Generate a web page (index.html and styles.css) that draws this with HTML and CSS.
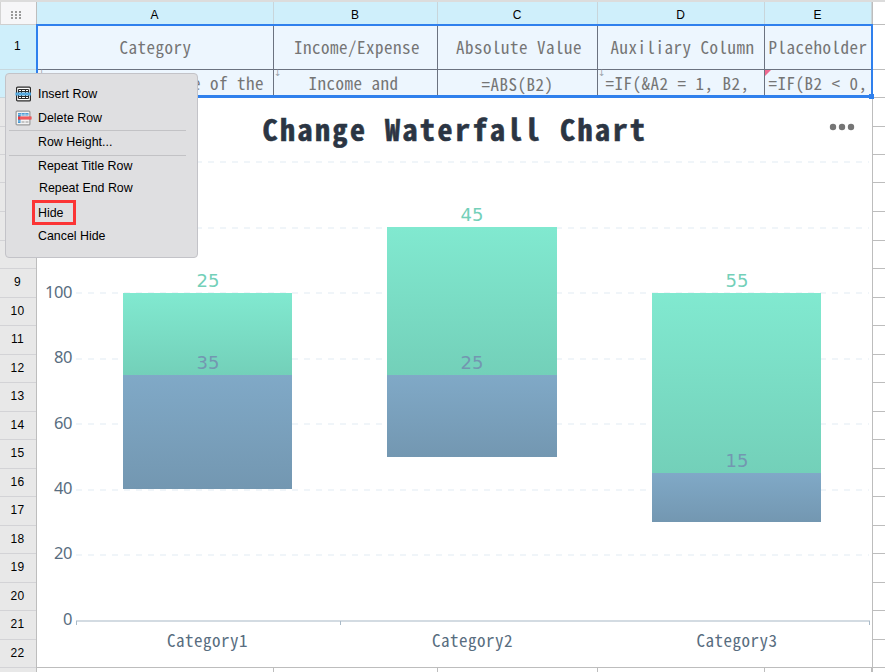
FILE: index.html
```html
<!DOCTYPE html>
<html lang="en">
  <head>
    <meta charset="UTF-8" />
    <meta name="viewport" content="width=device-width, initial-scale=1.0" />
    <title>Change Waterfall Chart</title>
    <link rel="stylesheet" href="styles.css">
  </head>
  <body>
    <div class="sheet">
      <div class="row-heads">
        <div class="corner">
          <svg width="11" height="9" viewBox="0 0 11 9" fill="#999">
            <path d="M0 0h2v2H0zM4 0h2v2H4zM8 0h2v2H8zM0 3h2v2H0zM4 3h2v2H4zM8 3h2v2H8zM0 6h2v2H0zM4 6h2v2H4zM8 6h2v2H8z" />
          </svg>
        </div>
        <div class="row-head first on">1</div>
        <div class="row-head on"></div>
        <!-- rows 3 to 22 -->
        <div class="row-head"></div>
        <div class="row-head"></div>
        <div class="row-head"></div>
        <div class="row-head"></div>
        <div class="row-head"></div>
        <div class="row-head"></div>
        <div class="row-head">9</div>
        <div class="row-head">10</div>
        <div class="row-head">11</div>
        <div class="row-head">12</div>
        <div class="row-head">13</div>
        <div class="row-head">14</div>
        <div class="row-head">15</div>
        <div class="row-head">16</div>
        <div class="row-head">17</div>
        <div class="row-head">18</div>
        <div class="row-head">19</div>
        <div class="row-head">20</div>
        <div class="row-head">21</div>
        <div class="row-head">22</div>
        <div class="row-head"></div>
      </div>

      <div class="main">
        <div class="cols col-heads">
          <div>A</div>
          <div>B</div>
          <div>C</div>
          <div>D</div>
          <div>E</div>
        </div>
        <div class="selection">
          <div class="cols title-row">
            <div>Category</div>
            <div class="nudge">Income/Expense</div>
            <div class="nudge">Absolute Value</div>
            <div class="nudge">Auxiliary Column</div>
            <div>Placeholder</div>
          </div>
          <div class="cols data-row">
            <div class="expand cell-a">Name of the</div>
            <div class="expand cell-b">Income and</div>
            <div class="cell-c">=ABS(B2)</div>
            <div class="expand cell-d">=IF(&amp;A2 = 1, B2,</div>
            <div class="flag cell-e">=IF(B2 &lt; 0,</div>
          </div>
          <span class="handle"></span>
        </div>

        <svg class="chart" width="835" height="569" viewBox="37 98 835 569">
          <defs>
            <linearGradient id="green" x1="0" y1="0" x2="0" y2="1">
              <stop offset="0" stop-color="#81e9d0" />
              <stop offset="1" stop-color="#73d0b9" />
            </linearGradient>
            <linearGradient id="blue" x1="0" y1="0" x2="0" y2="1">
              <stop offset="0" stop-color="#80a9c7" />
              <stop offset="1" stop-color="#7397b1" />
            </linearGradient>
          </defs>
          <text class="chart-title" x="262.5" y="141">Change Waterfall Chart</text>
          <g fill="#757575">
            <circle cx="833" cy="127" r="3.2" />
            <circle cx="842" cy="127" r="3.2" />
            <circle cx="851" cy="127" r="3.2" />
          </g>
          <path class="grid" d="M76 162H869M76 228H869M76 293H869M76 359H869M76 424H869M76 490H869M76 555H869" />
          <path class="axis" d="M76 621H870" />
          <path class="tick" d="M76.5 621v4M340.5 621v4M869.5 621v4" />
          <g class="y-label">
            <text x="72" y="298">100</text>
            <text x="72" y="363">80</text>
            <text x="72" y="429">60</text>
            <text x="72" y="494">40</text>
            <text x="72" y="559">20</text>
            <text x="72" y="625">0</text>
          </g>
          <g fill="url(#green)">
            <rect x="123" y="293" width="169" height="82" />
            <rect x="387" y="227" width="170" height="148" />
            <rect x="652" y="293" width="169" height="180" />
          </g>
          <g fill="url(#blue)">
            <rect x="123" y="375" width="169" height="114" />
            <rect x="387" y="375" width="170" height="82" />
            <rect x="652" y="473" width="169" height="49" />
          </g>
          <g class="value up">
            <text x="208" y="287">25</text>
            <text x="472" y="221">45</text>
            <text x="737" y="287">55</text>
          </g>
          <g class="value down">
            <text x="208" y="369">35</text>
            <text x="472" y="369">25</text>
            <text x="737" y="467">15</text>
          </g>
          <g class="x-label">
            <text x="207.500" y="647">Category1</text>
            <text x="472.500" y="647">Category2</text>
            <text x="737" y="647">Category3</text>
          </g>
        </svg>
        <div class="cols last-row">
          <div></div>
          <div></div>
          <div></div>
          <div></div>
          <div></div>
        </div>
      </div>

      <div class="rest">
        <div></div>
        <div></div>
        <div></div>
        <div></div>
        <div></div>
        <div></div>
        <div></div>
        <div></div>
        <div></div>
        <div></div>
        <div></div>
        <div></div>
        <div></div>
        <div></div>
        <div></div>
        <div></div>
        <div></div>
        <div></div>
        <div></div>
        <div></div>
        <div></div>
        <div></div>
        <div></div>
        <div></div>
      </div>

      <div class="menu">
        <div class="item">
          <svg class="icon" width="17" height="16" viewBox="0 0 17 16">
            <rect x="1.6" y="1.1" width="13.8" height="13.8" rx="1" fill="#fff" stroke="#2b2b2b" stroke-width="1.2" />
            <path d="M3.500 3.500h10v9h-10zM3.500 5.500h10M3.500 10.500h10M6.500 3v10M10.500 3v10" fill="none" stroke="#2b2b2b" />
            <path d="M0.500 6.500h15.500v3H0.500z" fill="#3f9ad6" />
            <path d="M1.500 8h13.500" stroke="#76bdec" />
          </svg>
          <span>Insert Row</span>
        </div>
        <div class="item delete">
          <svg class="icon" width="17" height="16" viewBox="0 0 17 16">
            <rect x="1.1" y="1.1" width="13.8" height="13.8" rx="1" fill="#f4f4f4" stroke="#9a9a9a" stroke-width="1.2" />
            <path d="M3 3h10.500v2.600H3zM3 3h2.500v10H3z" fill="#3f94d0" />
            <path d="M3 4.300h10.500M6.500 2.500v3.500M10 2.500v3.500M3 11h2.500" stroke="#cfe3f2" stroke-width=".6" />
            <path d="M6.500 11h3v2h-3zM10.500 11h3v2h-3z" fill="#c4c4c4" />
            <path d="M3 6.500h13.500v3H3z" fill="#e9383d" />
            <path d="M5 8h11" stroke="#f77a7d" />
          </svg>
          <span>Delete Row</span>
        </div>
        <hr />
        <div class="item height">Row Height...</div>
        <hr />
        <div class="item title">Repeat Title Row</div>
        <div class="item end">Repeat End Row</div>
        <div class="item hide"><span>Hide</span></div>
        <div class="item cancel">Cancel Hide</div>
      </div>
    </div>
  </body>
</html>
```
FILE: styles.css
```css
body {
  margin: 0;
  background: #fff;
  font-family: "Liberation Sans", Arial, sans-serif;
  font-size: 12px;
}

.sheet {
  position: relative;
  display: flex;
  box-sizing: border-box;
  width: 885px;
  height: 672px;
  border-top: 2px solid #dcdcdc;
  overflow: hidden;
}

.row-heads,
.rest {
  display: grid;
  grid-template-rows: 23px 45px 28px 29px 28px 28px 29px 29px 28px 29px 28px 29px 28px 29px 28px 29px 28px 29px 28px 29px 28px 29px 28px 29px;
}

.row-heads {
  flex: none;
  box-sizing: border-box;
  width: 37px;
  border-right: 1px solid #bdbdbd;
}

.corner {
  display: flex;
  align-items: center;
  justify-content: center;
  padding: 5px 5px 0 0;
  border-left: 1px solid #d4d4d4;
  border-bottom: 1px solid #cfcfcf;
  background: #f6f6f8;
}

.row-head {
  display: flex;
  align-items: center;
  justify-content: center;
  padding: 0 1px 2px 0;
  border-bottom: 1px solid #d3d3d6;
  background: #e8e8e8;
  letter-spacing: 0.3px;
}

.row-head.on {
  background: #cfeffb;
  border-color: #c8d8de;
}

.main {
  flex: none;
  width: 835px;
}

.cols {
  display: grid;
  grid-template-columns: 237px 164px 160px 167px 107px;
}

.cols div {
  display: flex;
  align-items: center;
  justify-content: center;
  box-sizing: border-box;
  border-right: 1px solid #6b7280;
  white-space: nowrap;
}

.col-heads {
  height: 22px;
  background: #cfeffb;
}

.cols.col-heads div {
  padding: 3px 1px 0 0;
  border-color: #c9d5da;
}

.selection {
  position: relative;
  box-sizing: border-box;
  width: 837px;
  height: 74px;
  margin-left: -1px;
  border: 2px solid #2f80ed;
  border-bottom-width: 3px;
  background: #edf6fe;
  color: #757575;
  font-family: "Noto Sans CJK JP", sans-serif;
  font-size: 17px;
  line-height: 20px;
  font-feature-settings: "hwid";
  letter-spacing: 0.5px;
}

.selection .cols {
  grid-template-columns: 236px 164px 160px 167px 106px;
}

.selection .cols div:last-child {
  border-right: none;
}

.title-row {
  height: 43px;
  border-bottom: 1px solid #6b7280;
}

.title-row .nudge {
  padding-left: 3px;
}

.title-row div {
  padding-bottom: 1px;
}

.data-row {
  height: 25px;
}

.data-row .cell-a {
  justify-content: flex-end;
  padding-right: 9px;
}

.data-row .cell-b {
  padding-right: 4px;
}

.data-row .cell-c {
  padding-top: 3px;
}

.data-row .cell-d {
  padding-right: 7px;
}

.expand,
.flag {
  position: relative;
}

.expand::before {
  content: "↓";
  position: absolute;
  left: 0;
  top: -2px;
  color: #9aa2aa;
  font: 9px/11px "DejaVu Sans", sans-serif;
}

.flag::before {
  content: "";
  position: absolute;
  left: 0;
  top: 0;
  border-top: 6px solid #ee6a90;
  border-right: 6px solid transparent;
}

.handle {
  position: absolute;
  right: -3px;
  bottom: -4px;
  width: 5px;
  height: 5px;
  background: #2f80ed;
}

.chart {
  display: block;
  background: #fff;
}

.chart-title {
  fill: #2b3543;
  stroke: #2b3543;
  stroke-width: 0.6;
  font: bold 30px "Noto Sans CJK JP", sans-serif;
  font-feature-settings: "hwid";
  letter-spacing: 2.5px;
}

.grid {
  stroke: #f0f5f9;
  stroke-width: 2;
  stroke-dasharray: 6 6;
}

.axis {
  stroke: #d3dbe2;
  stroke-width: 2;
}

.tick {
  stroke: #a9bac8;
}

.x-label {
  fill: #586d80;
  font: 17px "Noto Sans CJK JP", sans-serif;
  font-feature-settings: "hwid";
  letter-spacing: 0.5px;
  text-anchor: middle;
}

.y-label {
  fill: #586d80;
  font: 16.5px "Noto Sans", sans-serif;
  letter-spacing: -0.4px;
  text-anchor: end;
}

.value {
  font: 18px "DejaVu Sans", Verdana, sans-serif;
  text-anchor: middle;
}

.up {
  fill: #73d0b9;
}

.down {
  fill: #7397b1;
}

.last-row {
  height: 5px;
  border-top: 1px solid #bdbdbd;
}

.cols.last-row div {
  border-color: #bdbdbd;
}

.rest {
  flex: 1;
  border-left: 1px solid #bdbdbd;
}

.rest div {
  border-bottom: 1px solid #bdbdbd;
}

.menu {
  position: absolute;
  left: 5px;
  top: 71px;
  box-sizing: border-box;
  width: 193px;
  height: 185px;
  padding: 8px 0 0 3px;
  border: 1px solid #c3c3c8;
  border-radius: 4px;
  background: #dfdfe1;
  font-size: 12.4px;
}

.item {
  display: flex;
  align-items: center;
  height: 24px;
  padding-left: 29px;
}

.item .icon {
  margin: 0 6px 0 -23px;
}

.item.delete {
  height: 23px;
}

.menu hr {
  width: 177px;
  height: 1px;
  margin: 1px 0 0;
  border: none;
  background: #c2c2c5;
}

.item.height {
  height: 21px;
  padding-bottom: 2px;
}

.item.title {
  height: 20px;
  padding-bottom: 1px;
}

.item.end {
  height: 22px;
  padding-left: 30px;
}

.item.hide {
  height: 26px;
  padding-left: 23px;
}

.hide span {
  box-sizing: border-box;
  width: 44px;
  height: 25px;
  padding-left: 3px;
  border: 3px solid #fb3535;
  line-height: 20px;
}

.item.cancel {
  height: 22px;
}
```
